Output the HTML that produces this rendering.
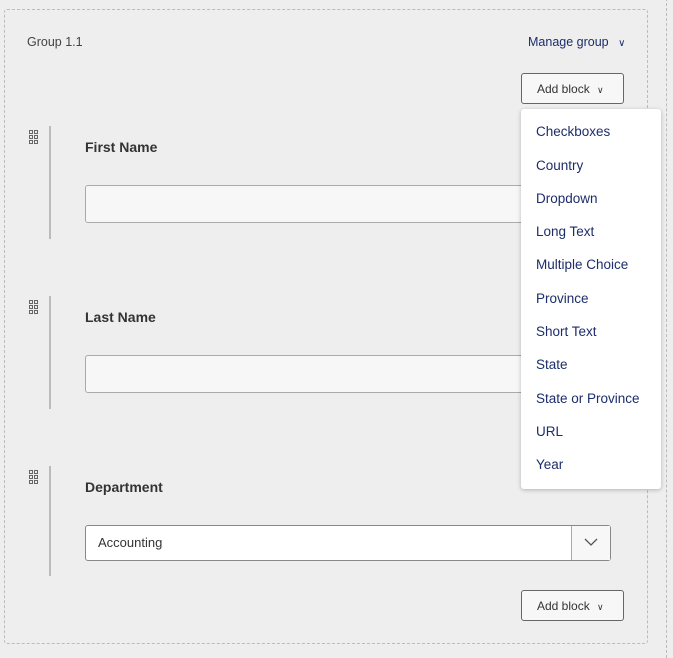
<html><head><style>
body{margin:0;width:673px;height:654px;background:#eee;font-family:"Liberation Sans",sans-serif;position:relative;overflow:hidden}
.a{position:absolute}
.outer{left:-2px;top:-2px;width:668px;height:660px;border-right:1px dashed #bbb}
.grp{left:4px;top:9px;width:642px;height:633px;border:1px dashed #bbb;border-radius:3px}
.t{font-size:13px;color:#444}
.btn{width:103px;height:31px;border:1px solid #666;border-radius:3px;background:#f7f7f7;font-size:12px;color:#333;box-sizing:border-box;padding:8px 0 0 15px}
.bar{left:49px;width:2px;background:#bbb}
.lbl{font-size:14px;font-weight:bold;color:#333;left:85px}
.inp{left:85px;width:526px;height:38px;border:1px solid #aaa;border-radius:3px;background:#f7f7f7;box-sizing:border-box}
.dd{left:521px;top:109px;width:140px;height:380px;background:#fff;border-radius:3px;box-shadow:0 1px 4px rgba(0,0,0,.25)}
.dd div{position:absolute;left:15px;font-size:13.5px;color:#1c2d6b}
.grip{left:29px;width:9px;height:14px}
</style></head><body>
<div class="a outer"></div>
<div class="a grp"></div>
<div class="a t" style="left:27px;top:35px;font-size:12.5px">Group 1.1</div>
<div class="a" style="left:528px;top:35px;font-size:12.5px;color:#1c2d6b">Manage group <span style="font-size:10px;margin-left:6px">&#8744;</span></div>
<div class="a btn" style="left:521px;top:73px">Add block <span style="font-size:9px;margin-left:4px">&#8744;</span></div>
<div class="a btn" style="left:521px;top:590px">Add block <span style="font-size:9px;margin-left:4px">&#8744;</span></div>

<svg class="a grip" style="top:130px" viewBox="0 0 9 14"><g fill="none" stroke="#666" stroke-width="1"><rect x=".5" y=".5" width="3" height="3"/><rect x="5.5" y=".5" width="3" height="3"/><rect x=".5" y="5.5" width="3" height="3"/><rect x="5.5" y="5.5" width="3" height="3"/><rect x=".5" y="10.5" width="3" height="3"/><rect x="5.5" y="10.5" width="3" height="3"/></g></svg>
<svg class="a grip" style="top:300px" viewBox="0 0 9 14"><g fill="none" stroke="#666" stroke-width="1"><rect x=".5" y=".5" width="3" height="3"/><rect x="5.5" y=".5" width="3" height="3"/><rect x=".5" y="5.5" width="3" height="3"/><rect x="5.5" y="5.5" width="3" height="3"/><rect x=".5" y="10.5" width="3" height="3"/><rect x="5.5" y="10.5" width="3" height="3"/></g></svg>
<svg class="a grip" style="top:470px" viewBox="0 0 9 14"><g fill="none" stroke="#666" stroke-width="1"><rect x=".5" y=".5" width="3" height="3"/><rect x="5.5" y=".5" width="3" height="3"/><rect x=".5" y="5.5" width="3" height="3"/><rect x="5.5" y="5.5" width="3" height="3"/><rect x=".5" y="10.5" width="3" height="3"/><rect x="5.5" y="10.5" width="3" height="3"/></g></svg>

<div class="a bar" style="top:126px;height:113px"></div>
<div class="a bar" style="top:296px;height:113px"></div>
<div class="a bar" style="top:466px;height:110px"></div>

<div class="a lbl" style="top:139px">First Name</div>
<div class="a inp" style="top:185px"></div>
<div class="a lbl" style="top:309px">Last Name</div>
<div class="a inp" style="top:355px"></div>
<div class="a lbl" style="top:479px">Department</div>
<div class="a inp" style="top:525px;height:36px;background:#fff;border-color:#888"><span class="a" style="left:12px;top:9px;font-size:13px;color:#333">Accounting</span><div class="a" style="right:0;top:0;width:38px;height:34px;border-left:1px solid #aaa;background:#f7f7f7"><svg class="a" style="left:12px;top:12px" width="14" height="9" viewBox="0 0 14 9"><path d="M1 1l6 6 6-6" fill="none" stroke="#555" stroke-width="1.3"/></svg></div></div>

<div class="a dd">
<div style="top:15px">Checkboxes</div>
<div style="top:49px">Country</div>
<div style="top:82px">Dropdown</div>
<div style="top:115px">Long Text</div>
<div style="top:148px">Multiple Choice</div>
<div style="top:182px">Province</div>
<div style="top:215px">Short Text</div>
<div style="top:248px">State</div>
<div style="top:282px">State or Province</div>
<div style="top:315px">URL</div>
<div style="top:348px">Year</div>
</div>
</body></html>
